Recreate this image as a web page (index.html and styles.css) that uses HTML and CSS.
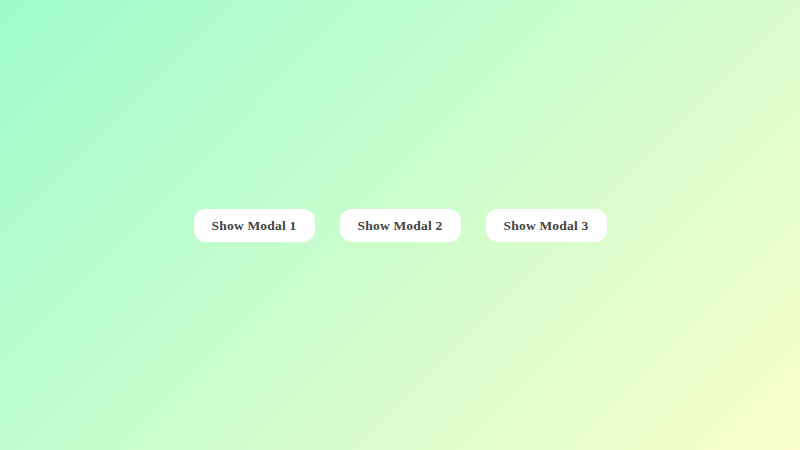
FILE: index.html
```html
<!DOCTYPE html>
<html lang="en">
<head>
<meta charset="utf-8">
<title>Modals</title>
<link rel="stylesheet" href="styles.css">
</head>
<body>
  <main class="stage">
    <div class="actions">
      <button class="open-btn" type="button">Show Modal 1</button>
      <button class="open-btn" type="button">Show Modal 2</button>
      <button class="open-btn" type="button">Show Modal 3</button>
    </div>
  </main>
</body>
</html>
```

FILE: styles.css
```css
html, body {
  margin: 0;
  height: 100%;
}

body {
  background: linear-gradient(135deg, #9efcce 0%, #ccfdcc 50%, #f9fecb 100%);
  font-family: "Liberation Serif", "Times New Roman", serif;
}

.stage {
  height: 100%;
  display: flex;
  align-items: center;
  justify-content: center;
}

.actions {
  display: flex;
  gap: 25px;
}

.open-btn {
  width: 121px;
  height: 33px;
  padding: 1px 0 0;
  border: none;
  border-radius: 12px;
  background: #ffffff;
  color: #444444;
  font-family: inherit;
  font-size: 13.5px;
  font-weight: bold;
  letter-spacing: 0.2px;
  cursor: pointer;
}
```
